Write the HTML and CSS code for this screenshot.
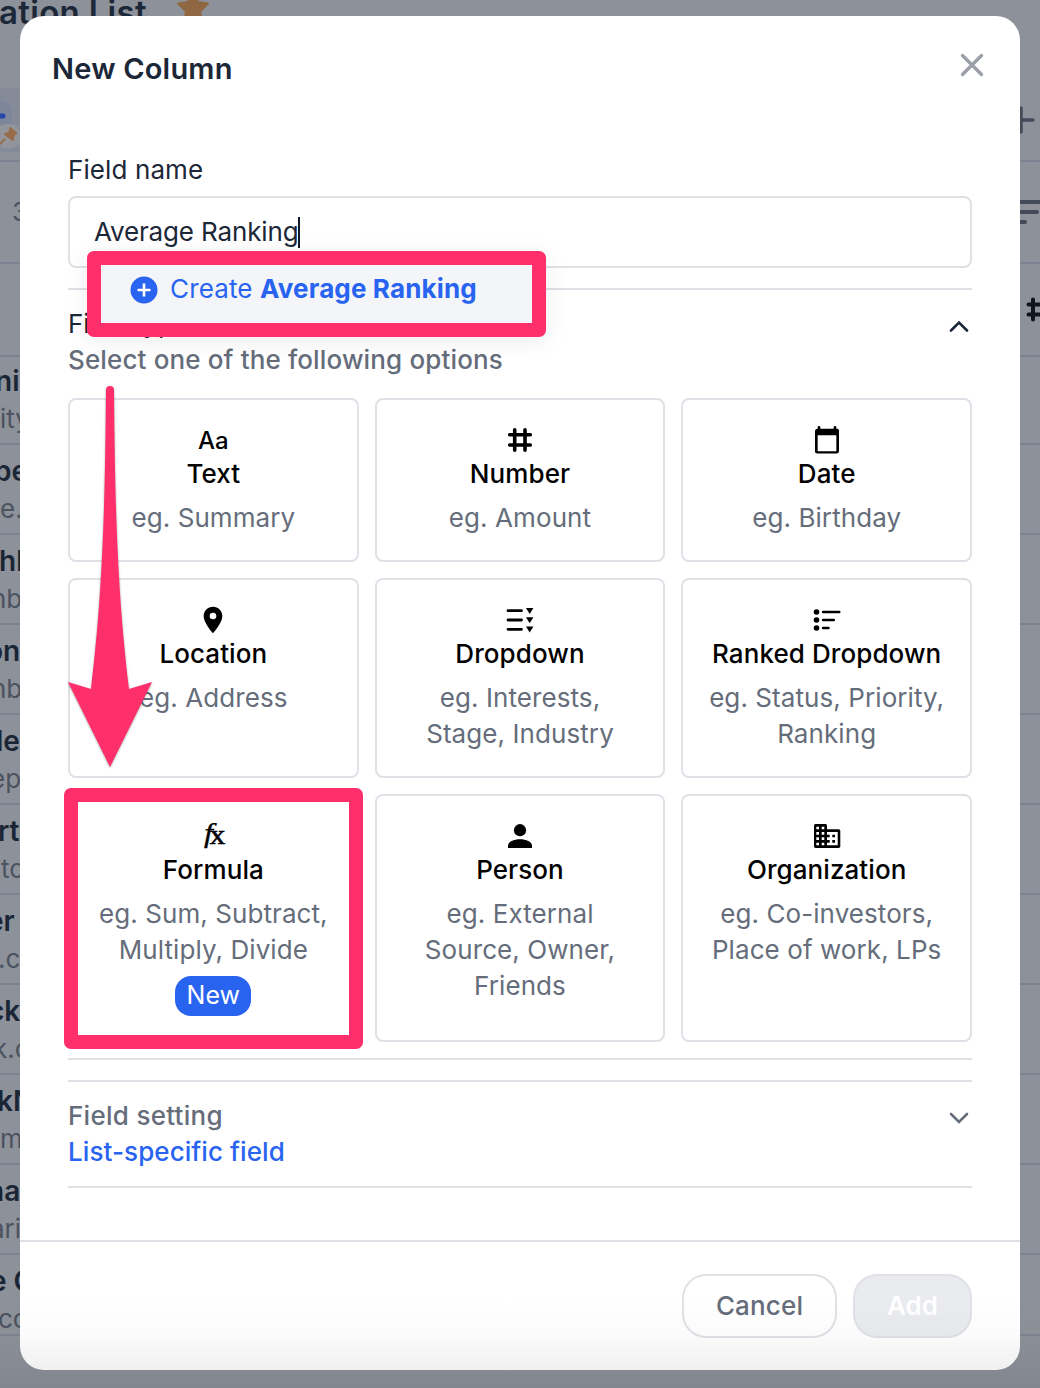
FILE: index.html
```html
<!DOCTYPE html>
<html lang="en">
<head>
  <meta charset="UTF-8">
  <title>New Column</title>
  <link rel="stylesheet" href="styles.css">
</head>
<body>
  <div class="page">
    <div class="page-header">
      <span class="page-title">ation List</span>
      <svg class="star" width="34" height="32" viewBox="0 0 34 32"><path d="M17 1l5 10 10 1.500-8 8 2 11-9-5-9 5 2-11-8-8 10-1.500z" fill="#8f6742" stroke="#8f6742" stroke-width="2" stroke-linejoin="round"/></svg>
    </div>
    <div class="tabs">
      <svg class="tab-icon" width="20" height="64" viewBox="0 0 20 64">
        <rect width="20" height="64" fill="#868b9a"/>
        <path d="M0 13a12 12 0 0 1 12 12v11H0z" fill="#7e869c"/>
        <path d="M0 28h3" stroke="#2448a8" stroke-width="5" stroke-linecap="round"/>
        <rect x="-4" y="36" width="25" height="24" rx="11" fill="#92969b"/>
        <path d="M10 39l7 6-3 3-1 5-4-3-5-4 5-2z" fill="#966c49" stroke="#966c49" stroke-linejoin="round"/>
        <path d="M0 56l5-5" stroke="#966c49" stroke-width="2"/>
      </svg>
      <svg width="20" height="30" viewBox="0 0 20 30"><path d="M1 3v24M1 15h12" stroke="#434b5b" stroke-width="3.500" stroke-linecap="round"/></svg>
    </div>
    <div class="toolbar">
      <span class="count">3</span>
      <svg width="20" height="26" viewBox="0 0 20 26"><path d="M0 3h24M0 13h17M0 23h5" stroke="#434b5b" stroke-width="4" stroke-linecap="round"/></svg>
    </div>
    <div class="table-head">
      <svg width="14" height="26" viewBox="0 0 14 26"><path d="M7 2.500v20M2.500 7.500h16M2.500 17.500h16" stroke="#10151d" stroke-width="4" stroke-linecap="round"/></svg>
    </div>
    <div class="rows">
      <div class="row"><b>ni</b><span>ity</span></div>
      <div class="row"><b>pe</b><span>e.</span></div>
      <div class="row"><b>hl</b><span>nb</span></div>
      <div class="row"><b>on</b><span>nb</span></div>
      <div class="row"><b>le</b><span>ep</span></div>
      <div class="row"><b>rt</b><span>to</span></div>
      <div class="row"><b>er</b><span>.c</span></div>
      <div class="row"><b>ck</b><span>k.c</span></div>
      <div class="row"><b>kN</b><span>m</span></div>
      <div class="row"><b>na</b><span>ari</span></div>
      <div class="row"><b>e C</b><span>co</span></div>
    </div>
  </div>

  <div class="modal">
    <div class="modal-header">
      <h1>New Column</h1>
      <svg width="24" height="24" viewBox="0 0 24 24"><path d="M2.500 2.500l19 19M21.500 2.500l-19 19" stroke="#9a9fa8" stroke-width="3.400" stroke-linecap="round"/></svg>
    </div>

    <div class="modal-body">
      <label class="field-label">Field name</label>
      <div class="input"><span>Average Ranking</span><i class="caret"></i></div>

      <div class="section field-type">
        <div class="section-head">
          <div>
            <div class="section-title">Field type</div>
            <div class="section-sub">Select one of the following options</div>
          </div>
          <svg class="chevron" width="20" height="12" viewBox="0 0 20 12"><path d="M2 10.500l8-8 8 8" fill="none" stroke="#1c2738" stroke-width="2.600" stroke-linecap="round"/></svg>
        </div>

        <div class="cards">
          <div class="card">
            <div class="icon icon-text">Aa</div>
            <h2>Text</h2>
            <p>eg. Summary</p>
          </div>
          <div class="card">
            <svg class="icon" viewBox="0 0 32 32"><path d="M10.700 5.700v20.600M21 5.700v20.600M5.700 10.700h20.600M5.700 21h20.600" stroke="#000" stroke-width="3.600" stroke-linecap="round"/></svg>
            <h2>Number</h2>
            <p>eg. Amount</p>
          </div>
          <div class="card">
            <svg class="icon" viewBox="0 -.5 24 24"><path d="M20 3h-1V2a1 1 0 0 0-2 0v1H7V2a1 1 0 0 0-2 0v1H4.700C3.800 3 3 3.800 3 4.700v15.300c0 1 .8 1.700 1.700 1.700h14.600c1 0 1.700-.8 1.700-1.700V4.700c0-.9-.5-1.700-1-1.700zM19 19.500c0 .3-.2.500-.5.500h-13a.5.500 0 0 1-.5-.5V8h14z"/></svg>
            <h2>Date</h2>
            <p>eg. Birthday</p>
          </div>
          <div class="card">
            <svg class="icon" viewBox="0 0 24 24"><path d="M12 2C8.130 2 5 5.130 5 9c0 5.250 7 13 7 13s7-7.750 7-13c0-3.870-3.130-7-7-7zm0 9.500a2.500 2.500 0 0 1 0-5 2.500 2.500 0 0 1 0 5z"/></svg>
            <h2>Location</h2>
            <p>eg. Address</p>
          </div>
          <div class="card">
            <svg class="icon" viewBox="0 0 32 32"><path d="M4 6.700h13.500M4 16h13.500M4 25.300h13.500" stroke="#000" stroke-width="2.800" stroke-linecap="round"/><path d="M22 4h7.400l-3.700 6zM22 13.200h7.400l-3.700 6zM22 22.500h7.400l-3.700 6z"/></svg>
            <h2>Dropdown</h2>
            <p>eg. Interests, Stage, Industry</p>
          </div>
          <div class="card">
            <svg class="icon" viewBox="0 0 32 32"><circle cx="5.500" cy="8" r="2.800"/><circle cx="5.500" cy="16" r="2.800"/><circle cx="5.500" cy="24" r="2.800"/><path d="M12.200 8h16M12.200 16h10.500M12.200 24h5.200" stroke="#000" stroke-width="2.700" stroke-linecap="round"/></svg>
            <h2>Ranked Dropdown</h2>
            <p>eg. Status, Priority, Ranking</p>
          </div>
          <div class="card highlighted">
            <svg class="icon" viewBox="0 0 32 32"><text class="fx-f" x="7" y="22.300" textLength="9" lengthAdjust="spacingAndGlyphs">f</text><text class="fx-x" x="12.800" y="24" textLength="15.500" lengthAdjust="spacingAndGlyphs">x</text></svg>
            <h2>Formula</h2>
            <p>eg. Sum, Subtract, Multiply, Divide</p>
            <span class="badge">New</span>
          </div>
          <div class="card">
            <svg class="icon" viewBox="0 0 32 32"><circle cx="16" cy="10.200" r="6.100"/><path d="M4 28v-2.200c0-4.300 6-6.600 12-6.600s12 2.300 12 6.600V28z"/></svg>
            <h2>Person</h2>
            <p>eg. External Source, Owner, Friends</p>
          </div>
          <div class="card">
            <svg class="icon" viewBox="0 0 32 32"><path fill-rule="evenodd" d="M4.700 4h9.600c1 0 1.700.700 1.700 1.700v3.600h11.600c1 0 1.700.700 1.700 1.700v15.300c0 1-.7 1.700-1.700 1.700H4.700c-1 0-1.700-.7-1.700-1.700V5.700C3 4.700 3.700 4 4.700 4zM5.300 6.700v2.600H8V6.700zM10.700 6.700v2.600h2.600V6.700zM5.300 12v2.700H8V12zM10.700 12v2.700h2.600V12zM5.300 17.300V20H8v-2.700zM10.700 17.300V20h2.600v-2.700zM5.300 22.700v2.600H8v-2.600zM10.700 22.700v2.600h2.600v-2.600zM16 12v2.700h2.700v2.600H16V20h2.700v2.700H16v2.600h10.700V12z"/><path d="M21.300 14.700H24v2.600h-2.700zM21.300 20H24v2.700h-2.700z"/></svg>
            <h2>Organization</h2>
            <p>eg. Co-investors, Place of work, LPs</p>
          </div>
        </div>
      </div>

      <div class="section field-setting">
        <div class="section-head">
          <div>
            <div class="section-sub">Field setting</div>
            <div class="section-link">List-specific field</div>
          </div>
          <svg class="chevron" width="20" height="12" viewBox="0 0 20 12"><path d="M2 2l8 8 8-8" fill="none" stroke="#656d7b" stroke-width="2.600" stroke-linecap="round"/></svg>
        </div>
      </div>
    </div>

    <div class="modal-footer">
      <button class="btn cancel">Cancel</button>
      <button class="btn add" disabled>Add</button>
    </div>

    <div class="suggestion">
      <svg width="28" height="28" viewBox="0 0 28 28"><circle cx="14" cy="14" r="13.500" fill="#2864f0"/><path d="M14 7.500v13M7.500 14h13" stroke="#fff" stroke-width="2.600"/></svg>
      <span class="create">Create <strong>Average Ranking</strong></span>
    </div>

    <svg class="arrow" width="92" height="390" viewBox="0 0 92 390"><path d="M42 8Q42 4 46 4Q50 4 50 8C51 135 54 215 65 307L88 300L46 385L4 300L27 307C38 215 41 135 42 8z"/></svg>
  </div>

  <div class="bottom-fade"></div>
</body>
</html>
```
FILE: styles.css
```css
* {
  box-sizing: border-box;
}
body {
  margin: 0;
  width: 1040px;
  height: 1388px;
  overflow: hidden;
  position: relative;
  background: #8d9199;
  font-family: Inter, "Liberation Sans", sans-serif;
  font-size: 26px;
  line-height: 36px;
  color: #1c2738;
}
svg {
  display: block;
  flex-shrink: 0;
}

/* dimmed list behind the modal */
.page {
  height: 1388px;
  overflow: hidden;
}
.page-header {
  height: 88px;
  display: flex;
  align-items: flex-start;
}
.page-title {
  width: 177px;
  margin-top: -6px;
  margin-left: -1px;
  font-size: 33px;
  font-weight: 600;
  letter-spacing: 0.3px;
  white-space: nowrap;
}
.star {
  margin-top: -9px;
}
.tabs {
  height: 74px;
  display: flex;
  justify-content: space-between;
  border-bottom: 2px solid #7d8290;
}
.tabs svg + svg {
  margin-top: 17px;
}
.toolbar {
  height: 102px;
  padding-left: 12px;
  display: flex;
  justify-content: space-between;
  align-items: center;
  border-bottom: 2px solid #7d8290;
  color: #4b5360;
}
.table-head {
  height: 93px;
  display: flex;
  justify-content: flex-end;
  align-items: center;
  border-bottom: 2px solid #7d8290;
  margin-bottom: -2px;
}
.row {
  height: 90px;
  padding-top: 8px;
  border-bottom: 2px solid #7d8290;
}
.row:last-child {
  height: 81px;
}
.row b,
.row span {
  display: block;
  white-space: nowrap;
}
.row b {
  font-size: 28px;
  font-weight: 600;
  color: #1a2535;
}
.row span {
  margin-top: 2px;
  color: #4b5360;
}
/* the name column is scrolled, so each row starts at a different letter */
.row:nth-child(1) b { text-indent: -5px; }
.row:nth-child(2) b { text-indent: -6px; }
.row:nth-child(3) b { text-indent: -1px; }
.row:nth-child(4) b { text-indent: -14px; }
.row:nth-child(5) b { text-indent: -4px; }
.row:nth-child(6) b { text-indent: -2px; }
.row:nth-child(7) b { text-indent: -13px; }
.row:nth-child(8) b { text-indent: -12px; }
.row:nth-child(9) b { text-indent: -3px; }
.row:nth-child(10) b { text-indent: -13px; }
.row:nth-child(11) b { text-indent: -10px; }
.row:nth-child(3) span,
.row:nth-child(4) span { text-indent: -9px; }
.row:nth-child(5) span { text-indent: -10px; }
.row:nth-child(6) span { text-indent: 1px; }
.row:nth-child(7) span { text-indent: -2px; }
.row:nth-child(8) span { text-indent: -7px; }
.row:nth-child(10) span { text-indent: -10px; }
.row:nth-child(11) span { text-indent: -2px; }

/* modal */
.modal {
  position: absolute;
  top: 16px;
  left: 20px;
  width: 1000px;
  height: 1354px;
  display: flex;
  flex-direction: column;
  background: #fff;
  border-radius: 24px;
}
.modal-header {
  display: flex;
  justify-content: space-between;
  align-items: center;
  padding: 34px 36px 0 32px;
}
.modal-header h1 {
  margin: 0;
  font-size: 29px;
  font-weight: 600;
  line-height: 38px;
  letter-spacing: 0.2px;
}
.modal-header svg {
  margin-top: -8px;
}
.modal-body {
  flex: 1;
  padding: 64px 48px 0;
}
.field-label {
  display: block;
  margin-bottom: 8px;
  letter-spacing: 0.1px;
}
.input {
  height: 72px;
  margin-bottom: 20px;
  padding: 0 24px;
  display: flex;
  align-items: center;
  border: 2px solid #e0e1e7;
  border-radius: 8px;
  letter-spacing: -0.15px;
}
.caret {
  width: 2px;
  height: 31px;
  background: #10192a;
}
.section {
  border-top: 2px solid #e0e1e7;
  border-bottom: 2px solid #e0e1e7;
}
.section-head {
  display: flex;
  justify-content: space-between;
}
.field-type {
  padding: 16px 0;
}
.field-setting {
  margin-top: 20px;
  padding: 16px 0;
}
.section-sub {
  font-weight: 500;
  letter-spacing: 0.14px;
  color: #656d7b;
}
.field-setting .section-sub {
  letter-spacing: 0.28px;
}
.section-link {
  font-weight: 500;
  letter-spacing: 0.08px;
  color: #2864f0;
}
.chevron {
  margin: 14px 3px 0 0;
}

.cards {
  margin-top: 20px;
  display: grid;
  grid-template-columns: repeat(3, 1fr);
  gap: 16px;
}
.card {
  position: relative;
  padding: 24px 20px;
  border: 2px solid #e0e1e7;
  border-radius: 8px;
  text-align: center;
  color: #000;
}
.icon {
  width: 32px;
  height: 32px;
  margin: 0 auto;
}
.icon-text {
  padding-top: 1px;
  font-size: 24px;
  line-height: 32px;
  font-weight: 550;
  display: flex;
  justify-content: center;
}
.fx-f {
  font: italic 27px "Liberation Serif", serif;
  stroke: #000;
  stroke-width: 0.3px;
}
.fx-x {
  font: 28px "Liberation Serif", serif;
  stroke: #000;
  stroke-width: 0.6px;
}
.card h2 {
  margin: 0 0 8px;
  font-size: 26px;
  font-weight: 500;
  line-height: 36px;
  letter-spacing: 0.08px;
}
.card p {
  margin: 0;
  color: #656d7b;
  letter-spacing: 0.08px;
}
/* narrower text column keeps the examples balanced */
.card:nth-child(5) p,
.card:nth-child(8) p {
  padding: 0 16px;
}
.badge {
  display: block;
  width: 76px;
  height: 40px;
  margin: 8px auto 0;
  border-radius: 16px;
  background: #2864f0;
  color: #fff;
  font-size: 25px;
  line-height: 38px;
}
/* marker frame around the formula card */
.highlighted::after {
  content: '';
  position: absolute;
  top: -8px;
  right: -6px;
  bottom: -9px;
  left: -6px;
  border: 14px solid #ff2f6c;
  border-radius: 7px;
}

.modal-footer {
  height: 130px;
  padding: 32px 48px;
  display: flex;
  justify-content: flex-end;
  gap: 16px;
  border-top: 2px solid #e0e1e7;
}
.btn {
  height: 64px;
  padding: 0 0 2px;
  border: 2px solid #e0e1e7;
  border-radius: 24px;
  font: 500 26px Inter, sans-serif;
}
.cancel {
  width: 155px;
  background: #fff;
  color: #656d7b;
  letter-spacing: 0.15px;
}
.add {
  width: 119px;
  background: #eaebef;
  color: #fff;
  font-weight: 600;
}

.suggestion {
  position: absolute;
  top: 235px;
  left: 67px;
  width: 459px;
  height: 86px;
  padding: 0 0 8px 29px;
  display: flex;
  align-items: center;
  gap: 12px;
  background: #f4f5f8;
  border: 14px solid #ff2f6c;
  border-radius: 7px;
  box-shadow: 0 4px 24px rgba(0, 0, 0, 0.08);
  color: #2864f0;
}
.create {
  margin-top: -2px;
  letter-spacing: 0.14px;
  white-space: nowrap;
}
.arrow {
  position: absolute;
  top: 366px;
  left: 44px;
  fill: #ff2f6c;
  filter: drop-shadow(0 1px 1px rgba(0, 0, 0, 0.35));
}
.bottom-fade {
  position: absolute;
  right: 0;
  bottom: 0;
  left: 0;
  height: 90px;
  background: linear-gradient(rgba(0, 0, 0, 0), rgba(0, 0, 0, 0.015) 40%, rgba(0, 0, 0, 0.08));
}
```
